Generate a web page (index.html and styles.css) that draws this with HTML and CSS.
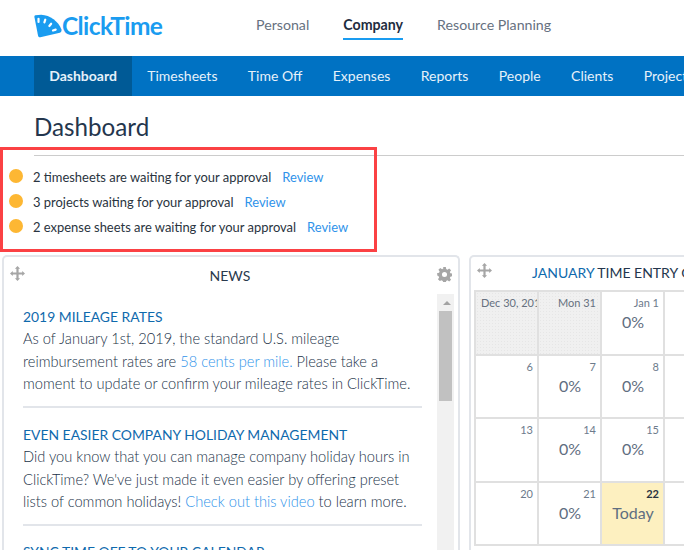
FILE: index.html
```html
<!DOCTYPE html>
<html lang="en">
<head>
<meta charset="utf-8">
<title>ClickTime Dashboard</title>
<link rel="stylesheet" href="styles.css">
</head>
<body>
<div class="page">
  <header class="top">
    <div class="logo">
      <svg class="logo-mark" width="28" height="24" viewBox="0 0 31 26"><path fill="#1a9cf0" d="M1.5 1.2 L8 .6 C18 1 27 8 30.4 17 C30.8 19 30 20 28.6 20.6 L7 25.4 C5.6 25.6 4.8 25 4.5 23.800 L.5 3.400 C.3 2.200 .6 1.400 1.500 1.200 Z"/><g stroke="#fff" stroke-width="2.400" stroke-linecap="round"><path d="M5 5v3.500"/><path d="M12.500 6l-1 3"/><path d="M19 10.500l-2 2.500"/><path d="M24 17l-3 1"/></g></svg>
      <span class="logo-text">ClickTime</span>
    </div>
    <nav class="top-nav">
      <a class="top-link">Personal</a>
      <a class="top-link active">Company</a>
      <a class="top-link">Resource Planning</a>
    </nav>
  </header>
  <nav class="main-nav">
    <a class="main-link active">Dashboard</a>
    <a class="main-link">Timesheets</a>
    <a class="main-link">Time Off</a>
    <a class="main-link">Expenses</a>
    <a class="main-link">Reports</a>
    <a class="main-link">People</a>
    <a class="main-link">Clients</a>
    <a class="main-link">Projects</a>
  </nav>
  <h1 class="title">Dashboard</h1>
  <section class="alerts">
    <div class="alert"><i class="dot"></i><span>2 timesheets are waiting for your approval</span><a class="review">Review</a></div>
    <div class="alert"><i class="dot"></i><span>3 projects waiting for your approval</span><a class="review">Review</a></div>
    <div class="alert"><i class="dot"></i><span>2 expense sheets are waiting for your approval</span><a class="review">Review</a></div>
  </section>
  <div class="highlight"></div>
  <div class="panels">
    <section class="panel news">
      <div class="panel-head">
        <svg class="move" width="15" height="15" viewBox="0 0 15 15"><path fill="#a6a6a6" d="M7.500 0l2.600 2.800H8.600v3.600h3.600V4.900L15 7.500l-2.800 2.600V8.600H8.600v3.600h1.500L7.500 15l-2.600-2.800h1.500V8.600H2.800v1.500L0 7.500l2.800-2.600v1.500h3.600V2.800H4.900z"/></svg>
        <h2 class="panel-title">NEWS</h2>
        <svg class="gear" width="15" height="15" viewBox="0 0 16 16"><path fill="#a6a6a6" fill-rule="evenodd" d="M6.600 0h2.800l.4 2.200 1.300.6L13 1.500l2 2-1.300 1.900.6 1.300 2.200.4v2.800l-2.200.4-.6 1.300 1.300 1.900-2 2-1.900-1.300-1.300.6-.4 2.200H6.600l-.4-2.200-1.300-.6L3 15l-2-2 1.300-1.900-.6-1.300L.5 9.400 0 6.600l2.200-.4.600-1.300L1.500 3l2-2 1.900 1.300 1.300-.6zM8 5.300a2.700 2.700 0 1 0 0 5.400 2.700 2.700 0 0 0 0-5.400z"/></svg>
      </div>
      <div class="news-body">
        <div class="news-list">
          <article class="story">
            <h3 class="story-title">2019 MILEAGE RATES</h3>
            <p class="story-text">As of January 1st, 2019, the standard U.S. mileage<br>reimbursement rates are <a class="link">58 cents per mile.</a> Please take a<br>moment to update or confirm your mileage rates in ClickTime.</p>
          </article>
          <article class="story">
            <h3 class="story-title">EVEN EASIER COMPANY HOLIDAY MANAGEMENT</h3>
            <p class="story-text">Did you know that you can manage company holiday hours in<br>ClickTime? We've just made it even easier by offering preset<br>lists of common holidays! <a class="link">Check out this video</a> to learn more.</p>
          </article>
          <article class="story last">
            <h3 class="story-title">SYNC TIME OFF TO YOUR CALENDAR</h3>
          </article>
        </div>
        <div class="scrollbar">
          <div class="scroll-up"></div>
          <div class="scroll-thumb"></div>
        </div>
      </div>
    </section>
    <section class="panel calendar">
      <div class="panel-head cal-head">
        <svg class="move" width="15" height="15" viewBox="0 0 15 15"><path fill="#a6a6a6" d="M7.500 0l2.600 2.800H8.600v3.600h3.600V4.900L15 7.500l-2.800 2.600V8.600H8.600v3.600h1.500L7.500 15l-2.600-2.800h1.500V8.600H2.800v1.500L0 7.500l2.800-2.600v1.500h3.600V2.800H4.900z"/></svg>
        <h2 class="cal-title"><span class="blue">JANUARY</span> TIME ENTRY COMPLETION</h2>
      </div>
      <div class="grid">
        <div class="cell off"><span class="date">Dec 30, 2019</span></div>
        <div class="cell off"><span class="date">Mon 31</span></div>
        <div class="cell"><span class="date">Jan 1</span><span class="pct">0%</span></div>
        <div class="cell"></div>
        <div class="cell"><span class="date">6</span></div>
        <div class="cell"><span class="date">7</span><span class="pct">0%</span></div>
        <div class="cell"><span class="date">8</span><span class="pct">0%</span></div>
        <div class="cell"></div>
        <div class="cell"><span class="date">13</span></div>
        <div class="cell"><span class="date">14</span><span class="pct">0%</span></div>
        <div class="cell"><span class="date">15</span><span class="pct">0%</span></div>
        <div class="cell"></div>
        <div class="cell"><span class="date">20</span></div>
        <div class="cell"><span class="date">21</span><span class="pct">0%</span></div>
        <div class="cell today"><span class="date">22</span><span class="pct">Today</span></div>
        <div class="cell"></div>
      </div>
    </section>
  </div>
</div>
</body>
</html>
```
FILE: styles.css
```css
* { box-sizing: border-box; }
html, body { margin: 0; padding: 0; height: 100%; overflow: hidden; background: #fff; }
body { font-family: Lato, "Open Sans", sans-serif; color: #2a3a4d; }
.page { position: relative; width: 684px; height: 550px; overflow: hidden; }
a { text-decoration: none; }
.top { height: 56px; display: flex; padding-left: 34px; }
.logo { width: 222px; display: flex; align-items: flex-start; padding-top: 14px; }
.logo-mark { flex: none; }
.logo-text { font-size: 24.5px; line-height: 23px; font-weight: 700; color: #1a9cf0; letter-spacing: -.6px; }
.top-nav { display: flex; gap: 34px; }
.top-link { font-size: 14.2px; color: #66717f; padding-top: 16px; height: 40px; line-height: 17px; }
.top-link.active { color: #1f2d3f; font-weight: 700; border-bottom: 2px solid #1a9cf0; }
.main-nav { height: 40px; background: #0072c3; display: flex; padding-left: 34px; white-space: nowrap; }
.main-link { color: #e6f1fa; font-size: 14px; line-height: 40px; padding: 0 15.2px; }
.main-link.active { background: #005a96; font-weight: 700; width: 99px; }
.title { margin: 0 0 0 34px; padding: 16px 0 0; height: 60px; font-size: 24.2px; line-height: 29px; font-weight: 400; color: #24364d; border-bottom: 1px solid #ccc; }
.alerts { padding: 8px 0 0 9px; height: 99px; font-size: 12.95px; color: #2a3440; }
.alert { display: flex; align-items: center; height: 25px; }
.dot { width: 14px; height: 14px; border-radius: 50%; background: #fdb733; margin-right: 10px; margin-top: -2px; flex: none; }
.review { color: #2f93ea; margin-left: 11px; }
.highlight { position: absolute; left: 0; top: 147px; width: 377px; height: 105px; border: 3px solid #fb4144; }
.panels { display: flex; gap: 9px; padding-left: 2px; }
.panel { border: 2px solid #e2e5ea; border-radius: 5px 5px 0 0; border-bottom: 0; height: 300px; flex: none; background: #fff; }
.news { width: 458px; }
.calendar { width: 260px; }
.panel-head { position: relative; height: 36px; display: flex; justify-content: center; }
.move { position: absolute; left: 6px; top: 9px; }
.gear { position: absolute; right: 6px; top: 10px; }
.panel-title { margin: 0 2px 0 0; font-size: 14px; font-weight: 400; line-height: 17px; padding-top: 10px; color: #2a3a4d; }
.news-body { display: flex; padding-left: 19px; }
.news-list { width: 399px; }
.story { border-bottom: 2px solid #e2e5ea; padding: 18px 0 10.5px; }
.story:first-child { padding-top: 15px; }
.story.last { padding-top: 17px; border-bottom: 0; }
.story-title { margin: 0 0 2px; font-size: 13.9px; line-height: 18px; font-weight: 400; color: #0f6aad; }
.story-text { margin: 0; font-size: 14.65px; line-height: 22.5px; font-weight: 300; color: #223248; white-space: nowrap; }
.link { color: #2f93ea; }
.scrollbar { width: 17px; margin-left: 15px; background: #f1f1f1; height: 260px; margin-top: 1px; padding: 0 2px; }
.scroll-up { height: 17px; position: relative; }
.scroll-up::before { content: ""; position: absolute; left: 4px; top: 7px; border: 4px solid transparent; border-top: 0; border-bottom: 4px solid #a3a3a3; }
.scroll-thumb { height: 90px; background: #c1c1c1; }
.cal-head { justify-content: flex-start; height: 33px; }
.cal-head .move { top: 6px; }
.cal-title { margin: 0; padding: 7px 0 0 61px; font-size: 14px; font-weight: 400; line-height: 17px; color: #24364d; white-space: nowrap; }
.blue { color: #0f6aad; }
.grid { display: grid; grid-template-columns: repeat(4, 63px); grid-auto-rows: 63.5px; margin-left: 3px; border-top: 2px solid #e0e0e0; border-left: 2px solid #e0e0e0; }
.cell { border-right: 2px solid #e0e0e0; border-bottom: 2px solid #e0e0e0; padding: 3px 4px 0 5px; display: flex; flex-direction: column; overflow: hidden; }
.off { background-color: #f0f0f0; background-image: radial-gradient(#e6e6e6 .6px, transparent .7px); background-size: 3px 3px; }
.today { background: #fdf0c0; }
.date { font-size: 11px; line-height: 15px; color: #6d7b8c; text-align: right; white-space: nowrap; }
.off .date { color: #66717f; }
.today .date { color: #2a3440; font-weight: 700; }
.pct { font-size: 16px; line-height: 20px; color: #5f6e80; text-align: center; padding: 2px 0 0; font-weight: 400; }
```
